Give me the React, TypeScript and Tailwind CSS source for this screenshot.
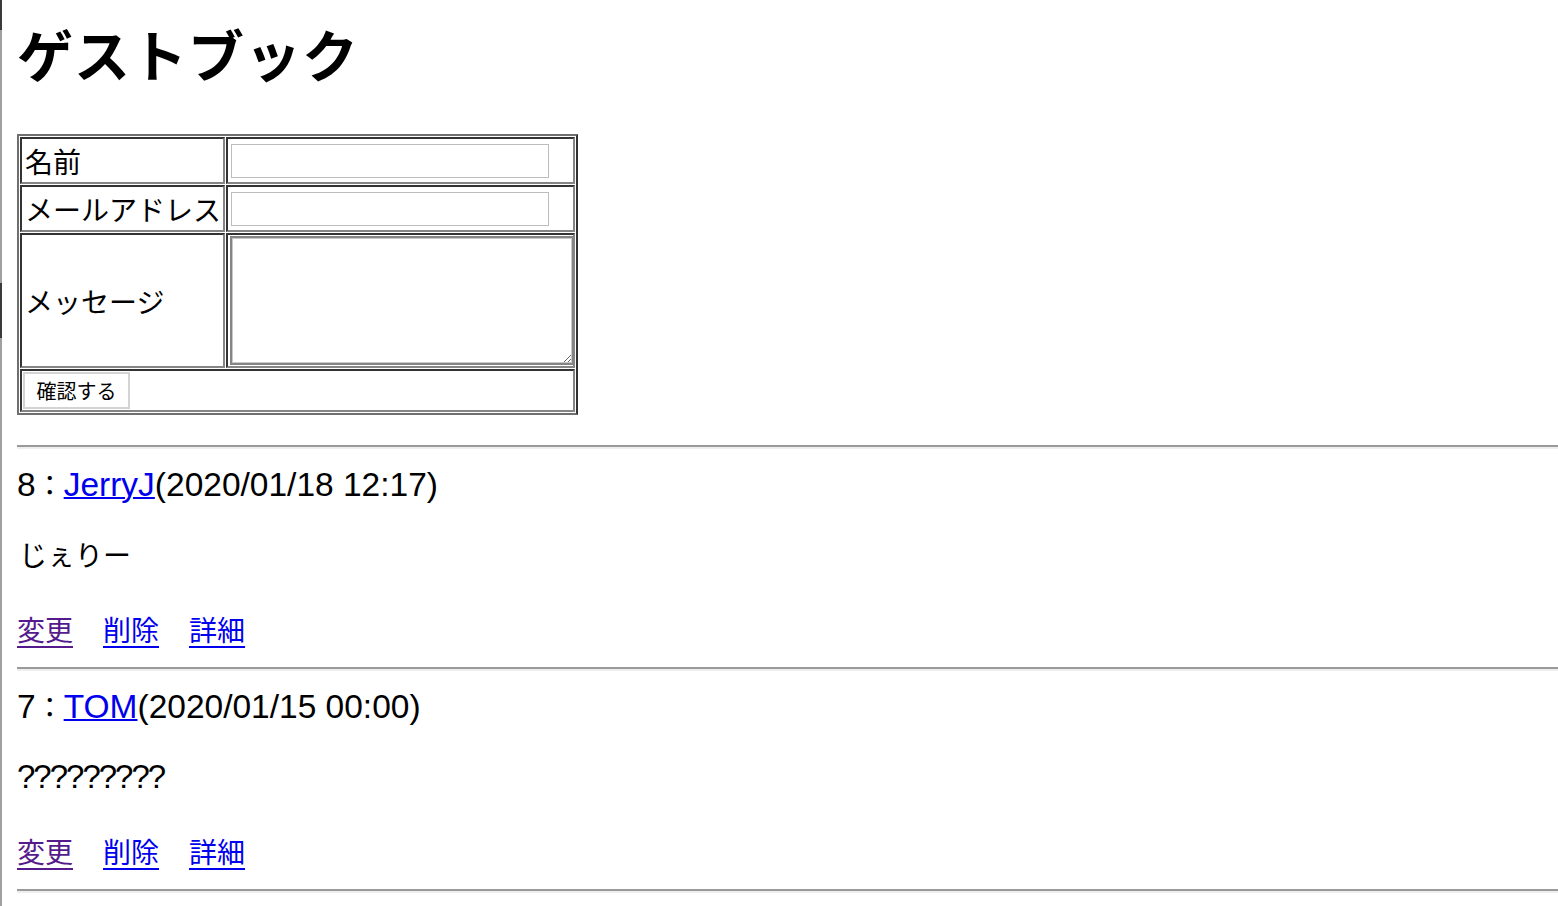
const jp = "font-['Noto_Sans_CJK_JP',sans-serif]"

interface Post {
  no: number
  name: string
  date: string
  body: string
}

const posts: Post[] = [
  { no: 8, name: 'JerryJ', date: '2020/01/18 12:17', body: 'じぇりー' },
  { no: 7, name: 'TOM', date: '2020/01/15 00:00', body: '?????????' },
]

function Divider() {
  return (
    <div className="flex flex-col">
      <div className="h-[2px] bg-[#9a9a9a]" />
      <div className="h-[2px] bg-[#eeeeee]" />
    </div>
  )
}

function Entry({ post }: { post: Post }) {
  return (
    <div className="flex flex-col">
      {/* header line */}
      <div className="mt-[17px] h-[37px] leading-[37px] whitespace-nowrap text-[33.5px]">
        {post.no}
        <span className={`${jp} text-[28px]`}>：</span>
        <a href="#" className="text-[#0000ee] underline decoration-2">
          {post.name}
        </a>
        ({post.date})
      </div>

      {/* body */}
      <div className="mt-[33px] h-[37px] leading-[37px]">
        {post.body.startsWith('?') ? (
          <span className="text-[33px] tracking-[-2px]">{post.body}</span>
        ) : (
          <span className={`${jp} text-[28px] pl-[2px]`}>{post.body}</span>
        )}
      </div>

      {/* actions */}
      <div className={`${jp} mt-[38px] mb-[19px] h-[37px] leading-[37px] text-[28px] flex gap-[30px]`}>
        <a href="#" className="text-[#551a8b] underline decoration-2 underline-offset-[5px]">
          変更
        </a>
        <a href="#" className="text-[#0000ee] underline decoration-2 underline-offset-[5px]">
          削除
        </a>
        <a href="#" className="text-[#0000ee] underline decoration-2 underline-offset-[5px]">
          詳細
        </a>
      </div>
      <Divider />
    </div>
  )
}

const cell =
  'border-2 border-t-[#333] border-l-[#333] border-b-[#858585] border-r-[#858585] p-[1px] align-middle'

export default function App() {
  return (
    <div className="flex min-h-screen bg-white text-black font-['Liberation_Sans','Noto_Sans_CJK_JP',sans-serif]">
      {/* window edge */}
      <div className="w-[2px] shrink-0 flex flex-col bg-[#a0a0a0]">
        <div className="h-[30px] bg-[#3a3a3a]" />
        <div className="h-[253px]" />
        <div className="h-[55px] bg-[#3a3a3a]" />
      </div>

      <div className="flex-1 pl-[15px] flex flex-col">
        {/* Title */}
        <h1 className={`${jp} mt-[16px] h-[74px] leading-[74px] text-[56px] font-bold tracking-[1px]`}>
          ゲストブック
        </h1>

        {/* Form */}
        <table className="mt-[44px] mb-[30px] w-[561px] table-fixed border-separate border-spacing-[1px] border-2 border-[#6f6f6f] border-r-[#333]">
          <tbody>
            <tr className="h-[47px]">
              <td className={`${cell} w-[205px] ${jp} text-[28px] pl-[3px] leading-[40px]`}>名前</td>
              <td className={`${cell} pl-[3px]`}>
                <input type="text" className="block w-[318px] h-[34px] border border-[#bdbdbd] bg-white" />
              </td>
            </tr>
            <tr className="h-[47px]">
              <td className={`${cell} ${jp} text-[28px] pl-[3px] leading-[40px] whitespace-nowrap`}>
                メールアドレス
              </td>
              <td className={`${cell} pl-[3px]`}>
                <input type="text" className="block w-[318px] h-[34px] border border-[#bdbdbd] bg-white" />
              </td>
            </tr>
            <tr className="h-[133px]">
              <td className={`${cell} ${jp} text-[28px] pl-[3px]`}>メッセージ</td>
              <td className={`${cell} p-0`}>
                <textarea className="block w-[344px] h-[129px] ml-[1px] border-2 border-[#858585] shadow-[inset_0_0_0_1px_#c8c8c8] bg-white" />
              </td>
            </tr>
            <tr className="h-[40px]">
              <td colSpan={2} className={`${cell} pl-[1px]`}>
                <button
                  type="button"
                  className={`${jp} block w-[107px] h-[37px] border-2 border-[#d3d3d3] bg-white text-[20px] leading-none`}
                >
                  確認する
                </button>
              </td>
            </tr>
          </tbody>
        </table>

        <Divider />
        {posts.map((p) => (
          <Entry key={p.no} post={p} />
        ))}
      </div>
    </div>
  )
}
